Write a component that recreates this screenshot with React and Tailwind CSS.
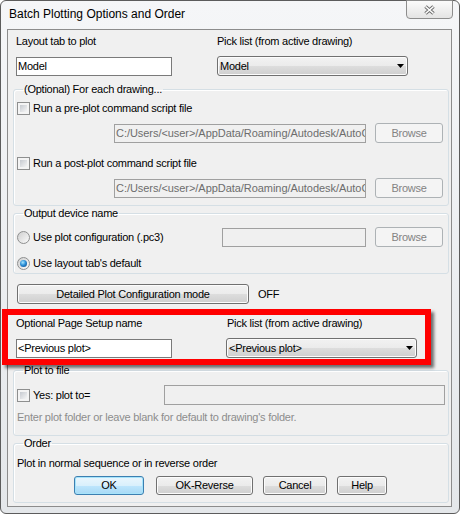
import React from 'react';

// Win7 "basic" dialog: Batch Plotting Options and Order

function Btn({ children, className = '', disabled, primary }) {
  let tone = 'border-[#707070] text-black bg-[linear-gradient(#f2f2f2_0%,#ebebeb_50%,#dddddd_50%,#cfcfcf_100%)] shadow-[inset_0_0_0_1px_#fcfcfc]';
  if (disabled) tone = 'border-[#adb2b5] text-[#838383] bg-[#f4f4f4]';
  if (primary) tone = 'border-[#3c7fb1] text-black bg-[linear-gradient(#eaf6fd_0%,#d9f0fc_50%,#bee6fd_50%,#a7d9f5_100%)] shadow-[inset_0_0_0_1px_#a6e4fb]';
  return (
    <button
      type="button"
      className={`flex shrink-0 items-center justify-center rounded-[3px] border text-[11px] leading-[13px] ${tone} ${className}`}
    >
      {children}
    </button>
  );
}

function Field({ children, className = '', disabled }) {
  const tone = disabled
    ? 'border-[#a0a0a0] bg-[#f0f0f0] text-[#6d6d6d] tracking-[-0.05px]'
    : 'border-[#7a7a7a] bg-white text-black';
  return (
    <div className={`flex shrink-0 items-center overflow-hidden whitespace-nowrap border pl-[1px] text-[11px] leading-[13px] ${tone} ${className}`}>
      {children}
    </div>
  );
}

function Combo({ value, className = '' }) {
  return (
    <div className={`flex h-[20px] shrink-0 items-center justify-between rounded-[3px] border border-[#707070] bg-[linear-gradient(#f2f2f2_0%,#ebebeb_50%,#dddddd_50%,#cfcfcf_100%)] pl-[2px] pr-[3px] shadow-[inset_0_0_0_1px_#fcfcfc] ${className}`}>
      <span>{value}</span>
      <svg width="7" height="4" viewBox="0 0 7 4">
        <path d="M0 0h7L3.5 4z" fill="#000" />
      </svg>
    </div>
  );
}

function Check() {
  return (
    <div className="h-[13px] w-[13px] shrink-0 border border-[#8e8f8f] bg-[#f4f4f4] p-[2px]">
      <div className="h-full w-full bg-linear-to-br from-[#c6cad0] to-[#f6f6f6]" />
    </div>
  );
}

function Radio({ checked }) {
  return (
    <div className="flex h-[13px] w-[13px] shrink-0 items-center justify-center rounded-full border border-[#8e8f8f] bg-linear-to-br from-[#cfcfcf] to-[#fbfbfb]">
      {checked && (
        <div className="h-[7px] w-[7px] rounded-full bg-[radial-gradient(circle_at_40%_35%,#a8e6ff_0%,#2b8fd8_45%,#0a3f7e_100%)]" />
      )}
    </div>
  );
}

function Group({ title, className = '', children }) {
  return (
    <fieldset className={`ml-[5px] w-[436px] rounded-[3px] border border-[#d5dfe5] px-[3px] shadow-[inset_1px_1px_0_#fff] ${className}`}>
      <legend className="ml-[6px] px-[1px] text-[11px] leading-[13px]">{title}</legend>
      {children}
    </fieldset>
  );
}

export default function App() {
  const path = 'C:/Users/<user>/AppData/Roaming/Autodesk/AutoCAD';

  return (
    <div className="h-[515px] w-[460px] bg-white font-['Liberation_Sans',Arial,sans-serif] text-[11px] leading-[13px] tracking-[-0.25px] text-black">
      <div className="h-[514px] w-[460px] rounded-[6px] border border-[#5c5c5c] bg-linear-to-b from-[#f5f6f8] to-[#e4e7ea]">

        {/* title bar */}
        <div className="flex h-[28px] items-start justify-between">
          <span className="pl-[8px] pt-[6px] text-[12px] leading-[15px] tracking-normal">Batch Plotting Options and Order</span>
          <div className="-mt-[1px] mr-[6px] flex h-[19px] w-[47px] items-center justify-center rounded-b-[4px] border border-[#8d8d8d] bg-linear-to-b from-[#fbfbfb] to-[#e4e4e4]">
            <svg width="13" height="10" viewBox="0 0 13 10">
              <path d="M2.5 1.5L10.5 8.5M10.5 1.5L2.5 8.5" stroke="#6e6e6e" strokeWidth="3.6" />
              <path d="M2.5 1.5L10.5 8.5M10.5 1.5L2.5 8.5" stroke="#ffffff" strokeWidth="1.6" />
            </svg>
          </div>
        </div>

        {/* client area */}
        <div className="ml-[6px] flex h-[478px] w-[445px] flex-col border border-[#8c8c8c] bg-[#f0f0f0]">

          <div className="ml-[8px] mt-[5px] flex">
            <span className="w-[201px]">Layout tab to plot</span>
            <span>Pick list (from active drawing)</span>
          </div>
          <div className="ml-[8px] mt-[8px] flex items-end">
            <Field className="h-[19px] w-[156px]">Model</Field>
            <Combo value="Model" className="ml-[45px] w-[191px]" />
          </div>

          <Group title="(Optional) For each drawing..." className="mt-[7px] pb-[7px]">
            <div className="mt-[6px] flex items-center">
              <Check />
              <span className="ml-[3px]">Run a pre-plot command script file</span>
            </div>
            <div className="mt-[8px] flex items-center">
              <Field disabled className="ml-[97px] h-[19px] w-[252px]">{path}</Field>
              <Btn disabled className="ml-[9px] h-[20px] w-[68px]">Browse</Btn>
            </div>
            <div className="mt-[14px] flex items-center">
              <Check />
              <span className="ml-[3px]">Run a post-plot command script file</span>
            </div>
            <div className="mt-[8px] flex items-center">
              <Field disabled className="ml-[97px] h-[19px] w-[252px]">{path}</Field>
              <Btn disabled className="ml-[9px] h-[20px] w-[68px]">Browse</Btn>
            </div>
          </Group>

          <Group title="Output device name" className="mt-[1px] pb-[3px]">
            <div className="mt-[7px] flex items-center">
              <div className="flex w-[205px] items-center">
                <Radio />
                <span className="ml-[3px]">Use plot configuration (.pc3)</span>
              </div>
              <Field disabled className="h-[19px] w-[144px]" />
              <Btn disabled className="ml-[9px] h-[20px] w-[68px]">Browse</Btn>
            </div>
            <div className="mt-[10px] flex items-center">
              <Radio checked />
              <span className="ml-[3px]">Use layout tab's default</span>
            </div>
          </Group>

          <div className="ml-[9px] mt-[10px] flex items-center">
            <Btn className="h-[20px] w-[232px]">Detailed Plot Configuration mode</Btn>
            <span className="ml-[9px]">OFF</span>
          </div>

          {/* highlighted section */}
          <div className="relative mt-[13px]">
            <div className="flex pl-[8px]">
              <span className="w-[211px]">Optional Page Setup name</span>
              <span>Pick list (from active drawing)</span>
            </div>
            <div className="mt-[8px] flex items-end pl-[8px]">
              <Field className="h-[19px] w-[156px]">&lt;Previous plot&gt;</Field>
              <Combo value="<Previous plot>" className="ml-[54px] w-[191px]" />
            </div>
            <div className="pointer-events-none absolute -bottom-[7px] -left-[6px] -top-[8px] w-[429px] border-[6px] border-[#ff0000] shadow-[3px_3px_3px_rgba(0,0,0,0.55)]" />
          </div>

          <Group title="Plot to file" className="mt-[6px] pb-[11px]">
            <div className="mt-[8px] flex items-center">
              <div className="flex w-[147px] items-center">
                <Check />
                <span className="ml-[3px]">Yes: plot to=</span>
              </div>
              <Field disabled className="h-[20px] w-[281px]" />
            </div>
            <p className="mt-[6px] text-[#8d8d8d]">Enter plot folder or leave blank for default to drawing's folder.</p>
          </Group>

          <Group title="Order" className="mt-[1px] pb-[7px]">
            <p className="mt-[7px]">Plot in normal sequence or in reverse order</p>
            <div className="mt-[6px] flex">
              <Btn primary className="ml-[57px] h-[19px] w-[70px]">OK</Btn>
              <Btn className="ml-[12px] h-[19px] w-[97px]">OK-Reverse</Btn>
              <Btn className="ml-[10px] h-[19px] w-[64px]">Cancel</Btn>
              <Btn className="ml-[10px] h-[19px] w-[50px]">Help</Btn>
            </div>
          </Group>
        </div>
      </div>
    </div>
  );
}
